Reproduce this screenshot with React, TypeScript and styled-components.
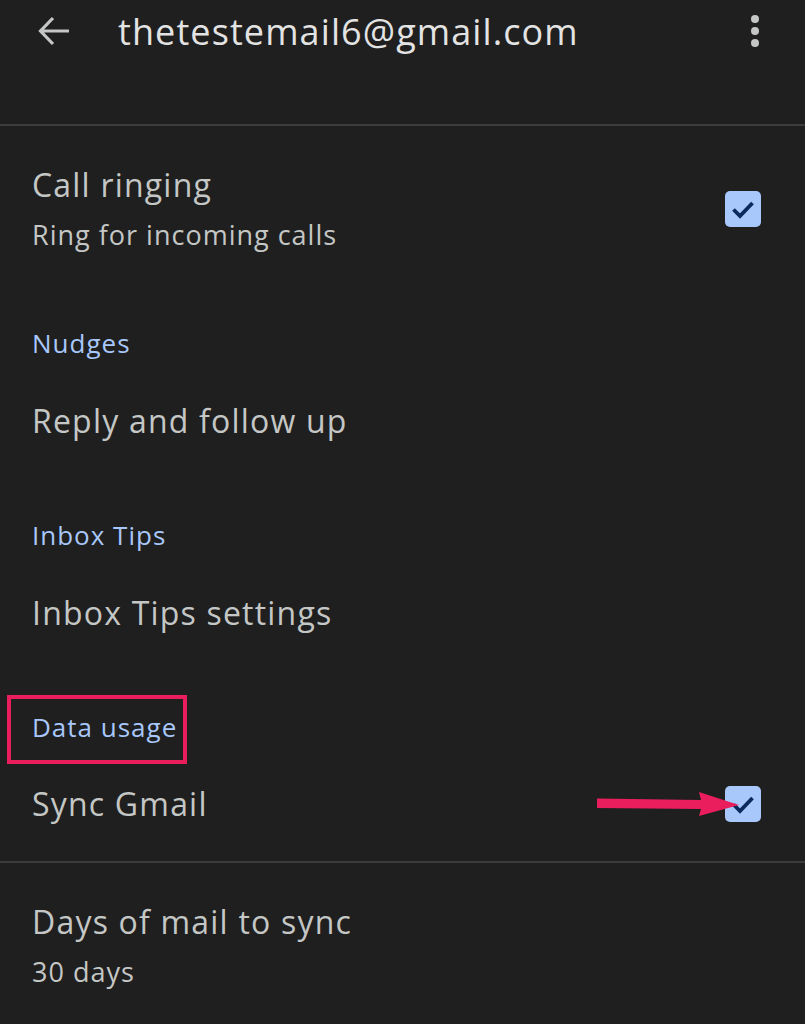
import React from "react";
import styled, { createGlobalStyle } from "styled-components";

const GlobalStyle = createGlobalStyle`
  html, body {
    margin: 0;
    padding: 0;
    background: #1f1f1f;
  }
  body {
    font-family: "Open Sans", Roboto, "Noto Sans", sans-serif;
  }
`;

const Page = styled.div`
  width: 805px;
  min-height: 1024px;
  background: #1f1f1f;
  overflow: hidden;
`;

const TopBar = styled.div`
  height: 62px;
  margin-bottom: 62px;
  display: flex;
  align-items: center;
  padding: 0 32px 0 36px;
  .title {
    flex: 1;
    margin-left: 46px;
    font-size: 36px;
    color: #e3e3e3;
    letter-spacing: 1.1px;
  }
`;

const IconButton = styled.div`
  width: 36px;
  height: 36px;
  display: flex;
  align-items: center;
  justify-content: center;
`;

const Divider = styled.div`
  height: 2px;
  background: #3c3c3c;
`;

const Item = styled.div<{ $tail?: number }>`
  position: relative;
  display: flex;
  align-items: center;
  padding: ${(p) => (p.$tail ? `39px 44px ${p.$tail}px 32px` : "40px 44px 40px 32px")};
  .text {
    flex: 1;
    display: flex;
    flex-direction: column;
    gap: 12px;
  }
  .title {
    font-size: 32px;
    line-height: 40px;
    letter-spacing: 1.2px;
    color: #c4c7c5;
  }
  .sub {
    font-size: 27px;
    line-height: 36px;
    letter-spacing: 1px;
    color: #c4c7c5;
  }
`;

const SectionHeader = styled.div`
  position: relative;
  padding: 36px 32px 0;
  font-size: 26px;
  line-height: 36px;
  letter-spacing: 1px;
  color: #a8c7fa;
  span {
    position: relative;
  }
`;

const Highlight = styled.div`
  position: absolute;
  left: -25px;
  top: -14px;
  width: 180px;
  height: 69px;
  box-sizing: border-box;
  border: 4px solid #ea1d5d;
`;

const Check = styled.div`
  width: 36px;
  height: 36px;
  border-radius: 5px;
  background: #a8c7fa;
  display: flex;
  align-items: center;
  justify-content: center;
`;

const Pointer = styled.svg`
  position: absolute;
  left: 595px;
  top: 50%;
  margin-top: -12px;
`;

const Checkbox = () => (
  <Check>
    <svg width="36" height="36" viewBox="0 0 36 36">
      <path d="M8.5 18.5l6.5 6.5L27.5 12" fill="none" stroke="#0b2a5c" strokeWidth="3.8" />
    </svg>
  </Check>
);

const SettingItem = (props: {
  title: string;
  sub?: string;
  checked?: boolean;
  tail?: number;
  children?: React.ReactNode;
}) => (
  <Item $tail={props.tail}>
    <div className="text">
      <div className="title">{props.title}</div>
      {props.sub && <div className="sub">{props.sub}</div>}
    </div>
    {props.checked && <Checkbox />}
    {props.children}
  </Item>
);

const App = () => {
  return (
    <Page>
      <GlobalStyle />
      <TopBar>
        <IconButton>
          <svg width="36" height="36" viewBox="0 0 36 36">
            <path
              d="M33 18H5M17 5L4.5 18L17 31"
              fill="none"
              stroke="#c4c7c5"
              strokeWidth="3.2"
            />
          </svg>
        </IconButton>
        <div className="title">thetestemail6@gmail.com</div>
        <IconButton>
          <svg width="12" height="36" viewBox="0 0 12 36">
            <circle cx="6" cy="6" r="4" fill="#c4c7c5" />
            <circle cx="6" cy="18" r="4" fill="#c4c7c5" />
            <circle cx="6" cy="30" r="4" fill="#c4c7c5" />
          </svg>
        </IconButton>
      </TopBar>
      <Divider />
      <SettingItem title="Call ringing" sub="Ring for incoming calls" checked tail={36} />
      <SectionHeader>Nudges</SectionHeader>
      <SettingItem title="Reply and follow up" />
      <SectionHeader>Inbox Tips</SectionHeader>
      <SettingItem title="Inbox Tips settings" />
      <SectionHeader>
        <span>
          <Highlight />
          Data usage
        </span>
      </SectionHeader>
      <SettingItem title="Sync Gmail" checked tail={37}>
        <Pointer width="146" height="26" viewBox="0 0 146 26">
          <path d="M2 7.5L106 9L104 1L144 14L104 25L106 18L2 17Z" fill="#ea1d5d" />
        </Pointer>
      </SettingItem>
      <Divider />
      <SettingItem title="Days of mail to sync" sub="30 days" tail={36} />
    </Page>
  );
};

export default App;
